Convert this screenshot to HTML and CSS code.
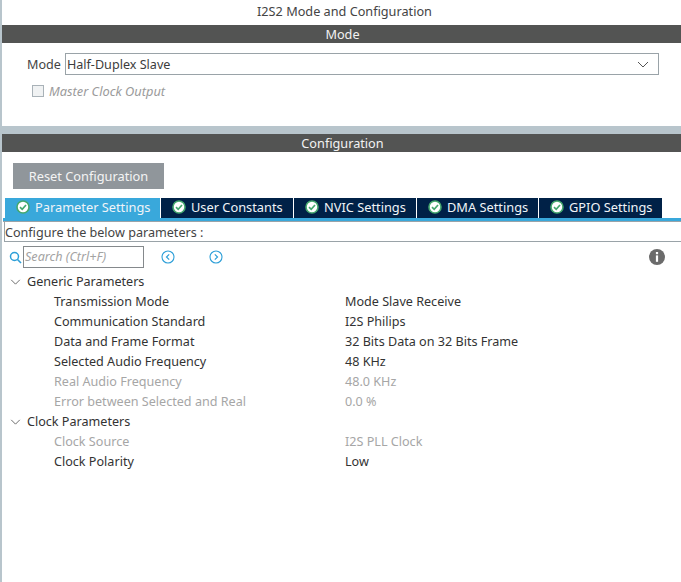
FILE: index.html
```html
<!DOCTYPE html>
<html lang="en">
<head>
<meta charset="utf-8">
<title>I2S2 Mode and Configuration</title>
<link rel="stylesheet" href="styles.css">
</head>
<body>
<svg width="0" height="0" class="defs">
  <symbol id="ok" viewBox="0 0 14 14">
    <circle cx="7" cy="7" r="6" fill="#fff" stroke="#45a86e" stroke-width="1.6"/>
    <path d="M4 7.2 6.2 9.3 10 5" fill="none" stroke="#45a86e" stroke-width="1.7"/>
  </symbol>
  <symbol id="chev" viewBox="0 0 12 7">
    <path d="M1 1 6 6 11 1" fill="none" stroke="currentColor" stroke-width="1"/>
  </symbol>
</svg>
<main class="page">
  <h1 class="title">I2S2 Mode and Configuration</h1>
  <h2 class="bar">Mode</h2>
  <section class="mode">
    <div class="mode-row">
      <span class="mode-label">Mode</span>
      <div class="select">
        <span>Half-Duplex Slave</span>
        <svg class="select-chev"><use href="#chev"/></svg>
      </div>
    </div>
    <label class="check"><span class="box"></span><em>Master Clock Output</em></label>
  </section>
  <h2 class="bar">Configuration</h2>
  <section class="config">
    <button class="reset" type="button">Reset Configuration</button>
    <nav class="tabs">
      <div class="tab active"><svg class="ok"><use href="#ok"/></svg>Parameter Settings</div>
      <div class="tab w-user"><svg class="ok"><use href="#ok"/></svg>User Constants</div>
      <div class="tab w-nvic"><svg class="ok"><use href="#ok"/></svg>NVIC Settings</div>
      <div class="tab w-dma"><svg class="ok"><use href="#ok"/></svg>DMA Settings</div>
      <div class="tab w-gpio"><svg class="ok"><use href="#ok"/></svg>GPIO Settings</div>
    </nav>
    <div class="tab-line"></div>
    <div class="hint">Configure the below parameters :</div>
    <div class="tools">
      <svg class="search-icon" viewBox="0 0 13 13"><circle cx="5.5" cy="5.5" r="4" fill="none" stroke="#2d9fd8" stroke-width="1.5"/><path d="M8.5 8.5 12 12" stroke="#2d9fd8" stroke-width="1.6"/></svg>
      <div class="search">Search (Ctrl+F)</div>
      <svg class="nav-icon prev" viewBox="0 0 14 14"><circle cx="7" cy="7" r="6" fill="none" stroke="#2d9fd8" stroke-width="1.1"/><path d="M8.2 4.4 5.5 7 8.2 9.6" fill="none" stroke="#2d9fd8" stroke-width="1.2"/></svg>
      <svg class="nav-icon next" viewBox="0 0 14 14"><circle cx="7" cy="7" r="6" fill="none" stroke="#2d9fd8" stroke-width="1.1"/><path d="M5.8 4.4 8.5 7 5.8 9.6" fill="none" stroke="#2d9fd8" stroke-width="1.2"/></svg>
      <svg class="info" viewBox="0 0 16 16"><circle cx="8" cy="8" r="8" fill="#6b6b6b"/><rect x="6.9" y="3" width="2.2" height="2.2" fill="#fff"/><rect x="6.9" y="6.4" width="2.2" height="6.4" fill="#fff"/></svg>
    </div>
    <div class="tree">
      <div class="group"><svg class="tree-chev"><use href="#chev"/></svg>Generic Parameters</div>
      <div class="row"><span>Transmission Mode</span><span>Mode Slave Receive</span></div>
      <div class="row"><span>Communication Standard</span><span>I2S Philips</span></div>
      <div class="row"><span>Data and Frame Format</span><span>32 Bits Data on 32 Bits Frame</span></div>
      <div class="row"><span>Selected Audio Frequency</span><span>48 KHz</span></div>
      <div class="row off"><span>Real Audio Frequency</span><span>48.0 KHz</span></div>
      <div class="row off"><span>Error between Selected and Real</span><span>0.0 %</span></div>
      <div class="group"><svg class="tree-chev"><use href="#chev"/></svg>Clock Parameters</div>
      <div class="row off"><span>Clock Source</span><span>I2S PLL Clock</span></div>
      <div class="row"><span>Clock Polarity</span><span>Low</span></div>
    </div>
  </section>
</main>
</body>
</html>
```
FILE: styles.css
```css
* { box-sizing: border-box; }
html, body { margin: 0; height: 100%; }
body {
  background: #fff;
  font-family: "Noto Sans", "Open Sans", sans-serif;
  font-size: 12.6px;
  color: #3c3c3c;
  overflow: hidden;
}
.defs { position: absolute; }
.page {
  height: 582px;
  width: 681px;
  border-left: 2px solid #b8c5cc;
  display: flex;
  flex-direction: column;
}
.title {
  margin: 0;
  height: 25px;
  padding-left: 6px;
  line-height: 23px;
  font-size: 12.7px;
  font-weight: 400;
  text-align: center;
  color: #444;
}
.bar {
  margin: 0;
  height: 18px;
  padding-left: 2px;
  line-height: 18px;
  font-size: 12.7px;
  font-weight: 400;
  text-align: center;
  color: #f2f2f2;
  background: #535453;
}
.mode {
  height: 91px;
  border-bottom: 8px solid #b8c5cc;
  padding-top: 10px;
}
.mode-row { display: flex; align-items: center; padding-left: 25px; gap: 4px; }
.mode-label { color: #444; }
.select {
  width: 594px;
  height: 22px;
  border: 1px solid #9aa3a8;
  padding: 0 9px 0 1px;
  display: flex;
  align-items: center;
  justify-content: space-between;
  color: #3c3c3c;
}
.select-chev { width: 12px; height: 7px; color: #555; }
.check {
  display: flex;
  align-items: center;
  gap: 5px;
  margin: 7px 0 0 30px;
  font-size: 12.8px;
  color: #9b9b9b;
}
.box { width: 12px; height: 12px; border: 1px solid #a9b2b8; background: #f0f2f3; }
.config { flex: 1; }
.reset {
  display: block;
  margin: 11px 0 0 11px;
  width: 151px;
  height: 26px;
  border: 0;
  padding: 0;
  background: #90969b;
  color: #f4f4f4;
  font: inherit;
  font-size: 12.8px;
}
.tabs { display: flex; gap: 1px; margin: 9px 0 0 3px; height: 20px; font-size: 12.8px; }
.tab {
  width: 155px;
  display: flex;
  align-items: center;
  padding: 0 0 2px 11px;
  gap: 5px;
  background: #002147;
  color: #f0f4f8;
  line-height: 18px;
}
.tab.active { background: #39a8db; }
.tab.w-user { width: 132px; }
.tab.w-nvic { width: 122px; }
.tab.w-dma { width: 121px; }
.tab.w-gpio { width: 123px; }
.ok { width: 14px; height: 14px; flex: none; }
.tab-line {
  height: 4px;
  margin-left: 1px;
  background: #39a8db;
  border-bottom: 1px solid #9aa3a8;
}
.hint {
  height: 20px;
  margin-left: 2px;
  border-left: 1px solid #9aa3a8;
  border-bottom: 1px solid #9aa3a8;
  line-height: 21px;
  color: #444;
}
.tools {
  display: flex;
  align-items: center;
  height: 22px;
  margin-top: 4px;
  padding-left: 7px;
}
.search-icon { width: 13px; height: 13px; flex: none; margin-right: 1px; }
.search {
  width: 121px;
  height: 22px;
  border: 1px solid #85898c;
  padding-left: 1px;
  line-height: 20px;
  font-style: italic;
  color: #a3a3a3;
}
.nav-icon { width: 14px; height: 14px; flex: none; }
.prev { margin-left: 17px; }
.next { margin-left: 34px; }
.info { width: 16px; height: 16px; margin-left: 426px; flex: none; }
.tree { margin-top: 4px; }
.group, .row { height: 20px; line-height: 20px; display: flex; align-items: center; color: #333; }
.group { padding-left: 8px; }
.tree-chev { width: 11px; height: 6px; margin-right: 6px; color: #555; }
.row { padding-left: 52px; }
.row span:first-child { width: 291px; }
.row.off { color: #a6a6a6; }
```
